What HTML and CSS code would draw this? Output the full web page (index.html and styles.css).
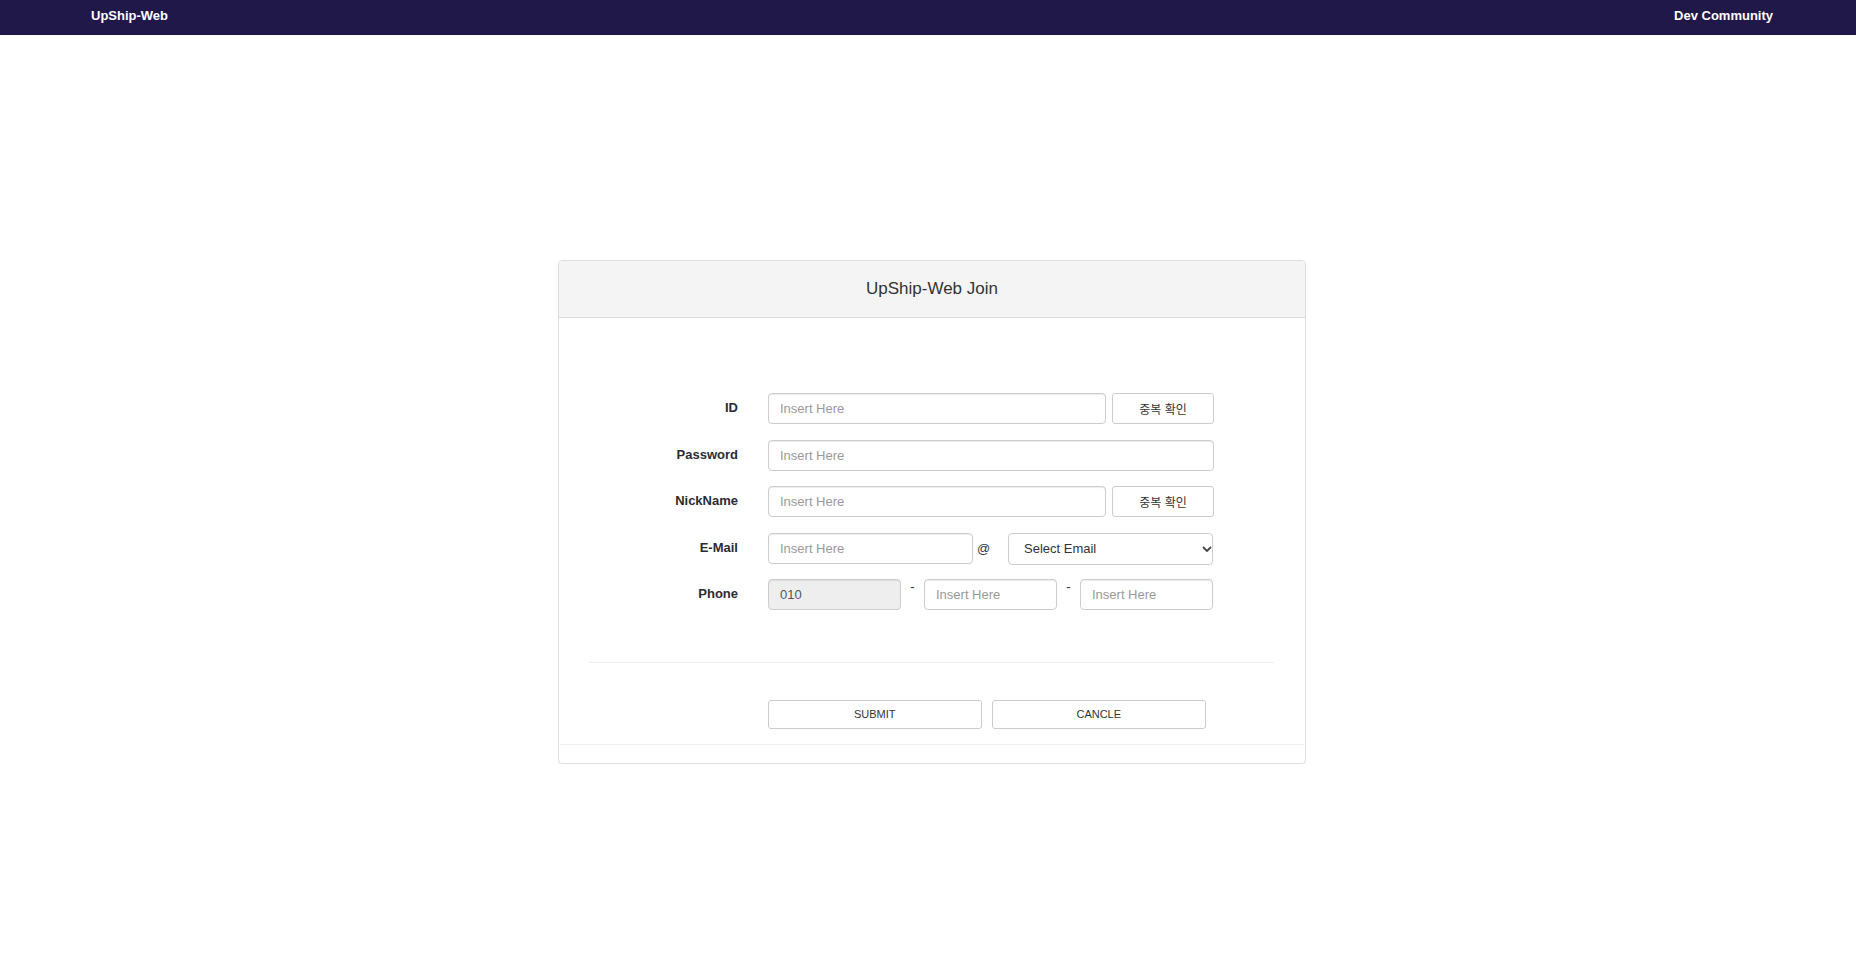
FILE: index.html
```html
<!DOCTYPE html>
<html lang="ko">
<head>
<meta charset="utf-8">
<title>UpShip-Web Join</title>
<link rel="stylesheet" href="styles.css">
</head>
<body>
<nav class="navbar">
  <a class="brand">UpShip-Web</a>
  <a class="nav-link">Dev Community</a>
</nav>

<div class="panel">
  <div class="panel-heading">UpShip-Web Join</div>
  <div class="panel-body">
    <form class="join-form">
      <div class="form-row">
        <label class="form-label">ID</label>
        <div class="controls controls-check">
          <input class="form-input" type="text" placeholder="Insert Here">
          <button type="button" class="btn-check">중복 확인</button>
        </div>
      </div>
      <div class="form-row">
        <label class="form-label">Password</label>
        <div class="controls">
          <input class="form-input" type="password" placeholder="Insert Here">
        </div>
      </div>
      <div class="form-row">
        <label class="form-label">NickName</label>
        <div class="controls controls-check">
          <input class="form-input" type="text" placeholder="Insert Here">
          <button type="button" class="btn-check">중복 확인</button>
        </div>
      </div>
      <div class="form-row">
        <label class="form-label">E-Mail</label>
        <div class="controls controls-email">
          <input class="form-input" type="text" placeholder="Insert Here">
          <span class="at">@</span>
          <div class="select-wrap">
            <select class="form-select">
              <option>Select Email</option>
            </select>
            <svg class="chevron" width="10" height="6" viewBox="0 0 10 6"><path d="M1 1 L5 5 L9 1" fill="none" stroke="#444" stroke-width="1.8"/></svg>
          </div>
        </div>
      </div>
      <div class="form-row">
        <label class="form-label">Phone</label>
        <div class="controls controls-phone">
          <input class="form-input readonly" type="text" value="010" readonly>
          <span class="dash">-</span>
          <input class="form-input" type="text" placeholder="Insert Here">
          <span class="dash">-</span>
          <input class="form-input" type="text" placeholder="Insert Here">
        </div>
      </div>
    </form>
    <hr class="divider">
    <div class="actions">
      <button type="button" class="btn-action">SUBMIT</button>
      <button type="button" class="btn-action">CANCLE</button>
    </div>
  </div>
  <div class="panel-footer"></div>
</div>
</body>
</html>
```

FILE: styles.css
```css
html, body {
  margin: 0;
  padding: 0;
  background: #ffffff;
  font-family: "Liberation Sans", Arial, sans-serif;
  color: #333333;
}

.navbar {
  height: 35px;
  box-sizing: border-box;
  background: #21184a;
  display: flex;
  justify-content: space-between;
  align-items: flex-start;
  padding: 0 83px 0 91px;
}

.brand,
.nav-link {
  color: #ffffff;
  font-weight: bold;
  font-size: 13px;
  line-height: 31px;
  text-decoration: none;
}

.panel {
  width: 748px;
  box-sizing: border-box;
  margin: 225px 0 0 558px;
  border: 1px solid #dddddd;
  border-radius: 4px;
  background: #ffffff;
  box-shadow: 0 1px 1px rgba(0, 0, 0, 0.05);
}

.panel-heading {
  height: 56px;
  line-height: 56px;
  background: #f4f4f4;
  border-bottom: 1px solid #dddddd;
  border-radius: 3px 3px 0 0;
  text-align: center;
  font-size: 17px;
  color: #333333;
}

.panel-body {
  padding-top: 75px;
}

.join-form {
  display: flex;
  flex-direction: column;
  gap: 15.5px;
  margin: 0;
}

.form-row {
  display: grid;
  grid-template-columns: 179px 446px;
  column-gap: 30px;
  align-items: center;
  height: 31px;
}

.form-label {
  text-align: right;
  font-weight: bold;
  font-size: 13px;
  color: #2b2b33;
  margin-top: -2px;
}

.controls {
  display: flex;
  align-items: center;
  height: 31px;
}

.form-input {
  height: 31px;
  box-sizing: border-box;
  border: 1px solid #cccccc;
  border-radius: 4px;
  padding: 0 11px;
  font-family: "Liberation Sans", Arial, sans-serif;
  font-size: 13px;
  color: #555555;
  background: #ffffff;
  box-shadow: inset 0 1px 1px rgba(0, 0, 0, 0.075);
  outline: none;
  min-width: 0;
  width: 100%;
}

.form-input::placeholder {
  color: #999999;
}

.form-input.readonly {
  background: #eeeeee;
}

.controls-check {
  gap: 6px;
}

.controls-check .form-input {
  width: 338px;
  flex: none;
}

.btn-check {
  width: 102px;
  height: 30.5px;
  box-sizing: border-box;
  border: 1px solid #cccccc;
  border-radius: 3px;
  background: #ffffff;
  color: #333333;
  font-family: "Noto Sans CJK KR", "Liberation Sans", sans-serif;
  font-size: 12px;
  padding: 0;
  flex: none;
}

.controls-email .form-input {
  width: 205px;
  flex: none;
}

.at {
  font-size: 13px;
  color: #333333;
  margin-left: 4px;
  width: 31px;
  flex: none;
}

.select-wrap {
  position: relative;
  width: 205px;
  height: 32px;
  flex: none;
  margin-top: 1px;
}

.form-select {
  appearance: none;
  -webkit-appearance: none;
  width: 100%;
  height: 32px;
  box-sizing: border-box;
  border: 1px solid #cccccc;
  border-radius: 4px;
  background: #ffffff;
  padding: 0 16px 0 15px;
  font-family: "Liberation Sans", Arial, sans-serif;
  font-size: 13px;
  color: #333333;
  outline: none;
}

.chevron {
  position: absolute;
  right: 1px;
  top: 13px;
  pointer-events: none;
}

.controls-phone {
  align-items: flex-start;
}

.controls-phone .form-input {
  width: 133px;
  flex: none;
}

.dash {
  width: 23px;
  flex: none;
  text-align: center;
  font-size: 13px;
  line-height: 15px;
  color: #333333;
}

.divider {
  border: 0;
  border-top: 1px solid #eeeeee;
  margin: 51.5px 31px 0 30px;
  height: 0;
}

.actions {
  display: flex;
  gap: 10.5px;
  padding: 37.5px 0 15.5px 209px;
}

.btn-action {
  width: 213.5px;
  height: 28.5px;
  box-sizing: border-box;
  border: 1px solid #cccccc;
  border-radius: 3px;
  background: #ffffff;
  color: #333333;
  font-family: "Liberation Sans", Arial, sans-serif;
  font-size: 11px;
  padding: 0;
}

.panel-footer {
  height: 18px;
  margin: 0 1px;
  border-top: 1px solid #eeeeee;
}
```
